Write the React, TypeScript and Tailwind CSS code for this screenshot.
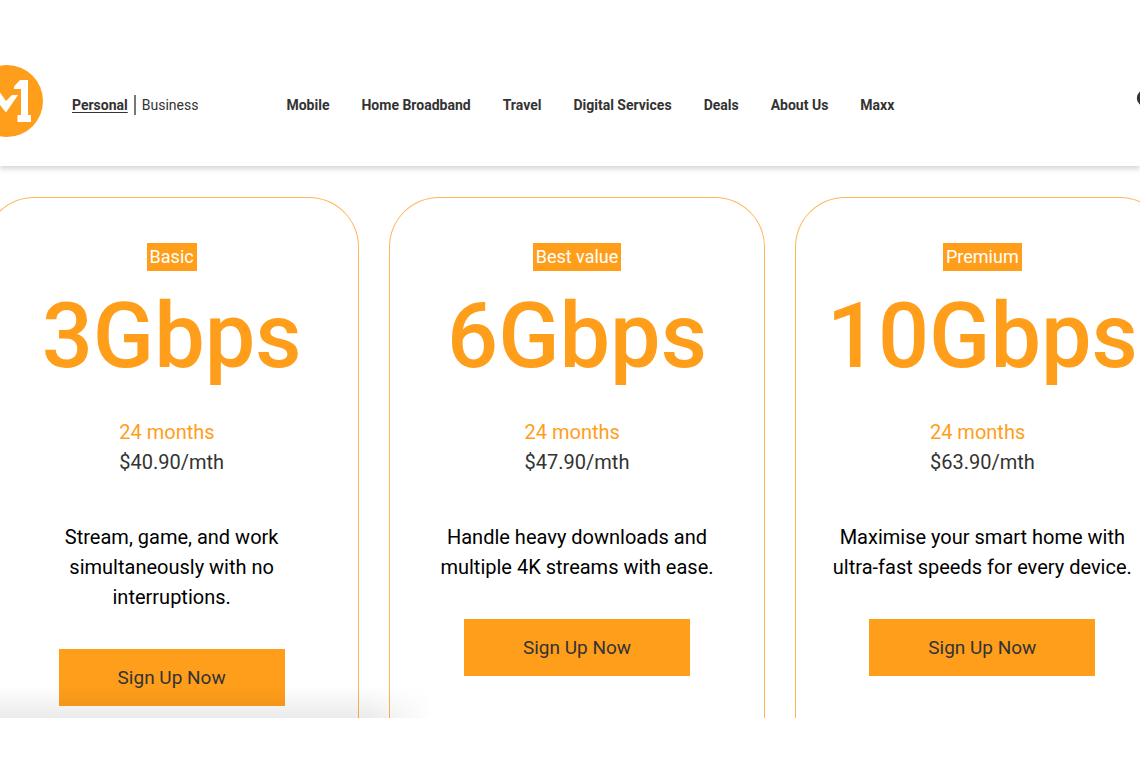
import React from "react";
import { Search } from "lucide-react";

const navItems = [
  { name: "Mobile", href: "#mobile" },
  { name: "Home Broadband", href: "#broadband" },
  { name: "Travel", href: "#travel" },
  { name: "Digital Services", href: "#digital" },
  { name: "Deals", href: "#deals" },
  { name: "About Us", href: "#about" },
  { name: "Maxx", href: "#maxx" },
];

const plans = [
  {
    tag: "Basic",
    speed: "3Gbps",
    price: "$40.90/mth",
    description: "Stream, game, and work simultaneously with no interruptions.",
  },
  {
    tag: "Best value",
    speed: "6Gbps",
    price: "$47.90/mth",
    description: "Handle heavy downloads and multiple 4K streams with ease.",
  },
  {
    tag: "Premium",
    speed: "10Gbps",
    price: "$63.90/mth",
    description:
      "Maximise your smart home with ultra-fast speeds for every device.",
  },
];

const Logo = () => (
  <svg viewBox="0 0 72 72" className="size-[72px]" aria-hidden="true">
    <circle cx="36" cy="36" r="36" fill="#ff9e1b" />
    <path d="M17 19h6l12 17 6-6h6L35 47.500 25 35v16h3v6H14v-6h3z" fill="#fff" />
    <path d="M43 21.500 49 15h8v35h3v7H46.500v-7H50V24h-7z" fill="#fff" />
  </svg>
);

const Header = () => (
  <header className="relative z-10 flex h-[166px] shrink-0 items-center bg-white pt-10 text-sm text-[#333] shadow-[0_3px_5px_rgba(0,0,0,0.16)]">
    <a href="#home" aria-label="M1" className="mb-1 -ml-[29px] shrink-0">
      <Logo />
    </a>
    <div className="mt-1 ml-[29px] flex items-center">
      <a
        href="#personal"
        className="font-bold underline decoration-1 underline-offset-2"
      >
        Personal
      </a>
      <span className="mx-1.5 h-5 w-0.5 bg-[#777]" />
      <a href="#business">Business</a>
    </div>
    <nav className="mt-1 ml-[88px] flex gap-8 font-bold whitespace-nowrap">
      {navItems.map((item) => (
        <a key={item.name} href={item.href}>
          {item.name}
        </a>
      ))}
    </nav>
    <button
      type="button"
      aria-label="Search"
      className="-mr-4 mb-2 ml-auto shrink-0 text-[#333]"
    >
      <Search className="size-5" strokeWidth={4} />
    </button>
  </header>
);

const PlanCard = ({ plan }: { plan: (typeof plans)[number] }) => (
  <article className="flex flex-col items-center rounded-t-[50px] border border-b-0 border-[#ffb55a] px-9 pt-[45px]">
    <span className="bg-[#ff9e1b] px-[3px] text-lg leading-7 text-white">
      {plan.tag}
    </span>
    <h2 className="mt-1.5 text-[90px] leading-[120px] font-medium text-[#ff9e1b]">
      {plan.speed}
    </h2>
    <div className="mt-5 text-xl leading-[30px] text-[#333]">
      <p className="text-[#ff9e1b]">24 months</p>
      <p>{plan.price}</p>
    </div>
    <p className="mt-[45px] text-center text-xl leading-[30px] text-black">
      {plan.description}
    </p>
    <button
      type="button"
      className="mt-[37px] h-[57px] w-[226px] bg-[#ff9e1b] pt-0.5 text-[19px] text-[#333]"
    >
      Sign Up Now
    </button>
  </article>
);

const App = () => {
  return (
    <div className="flex min-h-screen flex-col overflow-hidden bg-white pb-[42px] font-['Roboto',sans-serif]">
      <Header />
      <main className="relative flex flex-1 flex-col pt-[31px]">
        <div className="-mr-[30px] -ml-4 grid flex-1 grid-cols-3 gap-[30px]">
          {plans.map((plan) => (
            <PlanCard key={plan.tag} plan={plan} />
          ))}
        </div>
        {/* Soft shade along the bottom left edge */}
        <div className="pointer-events-none absolute bottom-0 left-0 h-8 w-[38%] bg-linear-to-t from-black/8 to-transparent mask-r-from-85%" />
      </main>
    </div>
  );
};

export default App;
